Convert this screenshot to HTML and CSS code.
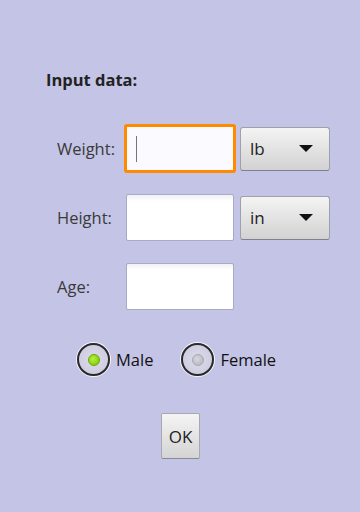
FILE: index.html
```html
<!DOCTYPE html>
<html lang="en">
<head>
    <meta charset="UTF-8">
    <meta name="viewport" content="width=device-width, initial-scale=1.0">
    <title>Input data</title>
    <link rel="stylesheet" href="styles.css">
</head>
<body>
    <div class="screen">
        <h1 class="title">Input data:</h1>

        <!-- Weight row -->
        <div class="row">
            <span class="label">Weight:</span>
            <div class="field focused"><span class="caret"></span></div>
            <div class="spinner"><span>lb</span><span class="arrow"></span></div>
        </div>

        <!-- Height row -->
        <div class="row">
            <span class="label">Height:</span>
            <div class="field"></div>
            <div class="spinner"><span>in</span><span class="arrow"></span></div>
        </div>

        <!-- Age row -->
        <div class="row">
            <span class="label">Age:</span>
            <div class="field"></div>
        </div>

        <!-- Sex -->
        <div class="radios">
            <div class="radio checked"><span class="ring"><span class="dot"></span></span>Male</div>
            <div class="radio"><span class="ring"><span class="dot"></span></span>Female</div>
        </div>

        <div class="actions">
            <div class="button">OK</div>
        </div>
    </div>
</body>
</html>
```

FILE: styles.css
```css
/* Page reset */
body {
    margin: 0;
    padding: 0;
    background-color: #c4c4e6;
    font-family: "Open Sans", "Noto Sans", sans-serif;
    color: #333;
}

.screen {
    width: 360px;
    height: 512px;
    box-sizing: border-box;
    padding-top: 68px;
}

.title {
    margin: 0 0 33px 46px;
    font-size: 16.5px;
    font-weight: bold;
    color: #222;
    line-height: 24px;
}

.row {
    display: flex;
    align-items: center;
    height: 47px;
    margin-bottom: 22px;
    padding-left: 57px;
}

.label {
    width: 69px;
    font-size: 16.5px;
    color: #3a3a3a;
}

/* Text boxes */
.field {
    width: 106px;
    height: 45px;
    background: linear-gradient(#f0f0f6, #ffffff 6px);
    border: 1px solid #a9a9c8;
    border-radius: 2px;
    display: flex;
    align-items: center;
}

.field.focused {
    margin-left: -2px;
    width: 106px;
    height: 43px;
    background: #fbfbff;
    border: 3px solid #ff8a00;
    border-radius: 3px;
}

.caret {
    width: 1px;
    height: 26px;
    margin-left: 9px;
    background-color: #777;
}

/* Drop-down spinners */
.spinner {
    margin-left: 6px;
    width: 90px;
    height: 44px;
    box-sizing: border-box;
    border: 1px solid #a0a0a8;
    border-bottom-color: #80808a;
    border-radius: 3px;
    background: linear-gradient(#f4f4f4, #d2d2d2);
    display: flex;
    align-items: center;
    justify-content: space-between;
    padding: 0 16px 0 9px;
    font-size: 17px;
    color: #222;
}

.field.focused + .spinner {
    margin-left: 4px;
}

.arrow {
    width: 0;
    height: 0;
    border-left: 7px solid transparent;
    border-right: 7px solid transparent;
    border-top: 7px solid #111;
}

/* Radio buttons */
.radios {
    display: flex;
    padding-left: 77px;
    margin-top: 33px;
    gap: 28px;
}

.radio {
    display: flex;
    align-items: center;
    font-size: 16.5px;
    color: #111;
}

.ring {
    width: 29px;
    height: 29px;
    border: 2px solid #2a2a2a;
    box-shadow: 0 0 0 1px #f4f4fa;
    border-radius: 50%;
    background: radial-gradient(circle, #dcdcec, #c8c8dc);
    display: flex;
    align-items: center;
    justify-content: center;
    margin-right: 6px;
}

.dot {
    width: 10px;
    height: 10px;
    border-radius: 50%;
    background: radial-gradient(circle at 40% 40%, #d8d8e0, #b0b0bc);
    border: 1px solid #a8a8b4;
}

.radio.checked .dot {
    background: radial-gradient(circle at 40% 40%, #b6f040, #74c400);
    border-color: #6aa800;
}

/* OK button */
.actions {
    display: flex;
    justify-content: center;
    padding-left: 1px;
    margin-top: 37px;
}

.button {
    width: 39px;
    height: 46px;
    box-sizing: border-box;
    border: 1px solid #a8a8b0;
    border-bottom-color: #8a8a92;
    border-radius: 2px;
    background: linear-gradient(#f4f4f4, #d4d4d4);
    display: flex;
    align-items: center;
    justify-content: center;
    font-size: 17px;
    color: #222;
}
```
